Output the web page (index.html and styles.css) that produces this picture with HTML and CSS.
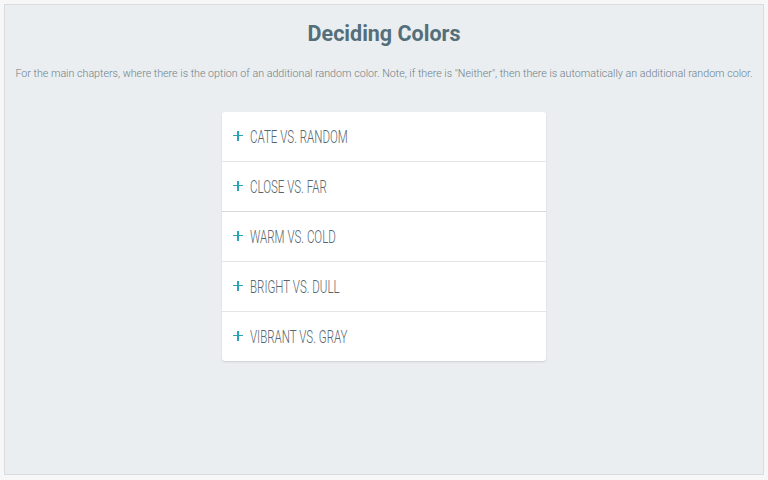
FILE: index.html
```html
<!DOCTYPE html>
<html>
<head>
<meta charset="utf-8">
<link rel="stylesheet" href="styles.css">
</head>
<body>
<div class="panel">
  <h1 class="title">Deciding Colors</h1>
  <p class="intro">For the main chapters, where there is the option of an additional random color. Note, if there is "Neither", then there is automatically an additional random color.</p>
  <div class="accordion">
    <div class="row"><span class="plus"></span><span class="label">CATE VS. RANDOM</span></div>
    <div class="row"><span class="plus"></span><span class="label">CLOSE VS. FAR</span></div>
    <div class="row"><span class="plus"></span><span class="label">WARM VS. COLD</span></div>
    <div class="row"><span class="plus"></span><span class="label">BRIGHT VS. DULL</span></div>
    <div class="row"><span class="plus"></span><span class="label">VIBRANT VS. GRAY</span></div>
  </div>
</div>
</body>
</html>
```
FILE: styles.css
```css
html, body { height: 100%; }
body {
  margin: 0;
  padding: 4px;
  box-sizing: border-box;
  background: #f7f7f7;
  font-family: Roboto, "Liberation Sans", sans-serif;
}
.panel {
  height: 471px;
  box-sizing: border-box;
  border: 1px solid #dadcdd;
  background: #eaeef1;
  display: flex;
  flex-direction: column;
  align-items: center;
}
.title {
  margin: 15px 0 0;
  font-size: 21.5px;
  font-weight: 700;
  color: #546e7a;
  line-height: 28px;
}
.intro {
  margin: 18px 0 0;
  font-size: 10.7px;
  font-weight: 300;
  color: #6f7f88;
  line-height: 16px;
  text-align: center;
  white-space: nowrap;
}
.accordion {
  margin-top: 30px;
  width: 324px;
  background: #fff;
  border-radius: 3px;
  box-shadow: 0 1px 2px rgba(0,0,0,0.12);
}
.row {
  height: 49px;
  display: flex;
  align-items: center;
  padding-left: 11px;
  gap: 7px;
  border-bottom: 1px solid #e2e5e7;
}
.row:last-child { border-bottom: none; }
.row:nth-child(2) { border-bottom-color: #d4d8db; }
.plus {
  position: relative;
  width: 10px;
  height: 10px;
  margin-top: -2px;
}
.plus::before, .plus::after {
  content: "";
  position: absolute;
  background: #2aa3b3;
}
.plus::before { left: 0; top: 4px; width: 10px; height: 1.5px; }
.plus::after { left: 4.25px; top: 0; width: 1.5px; height: 10px; }
.label {
  display: inline-block;
  font-family: Roboto, "Liberation Sans", sans-serif;
  font-size: 18px;
  font-weight: 300;
  color: #56656e;
  transform: scaleX(0.64);
  transform-origin: left center;
  letter-spacing: 0;
}
```
